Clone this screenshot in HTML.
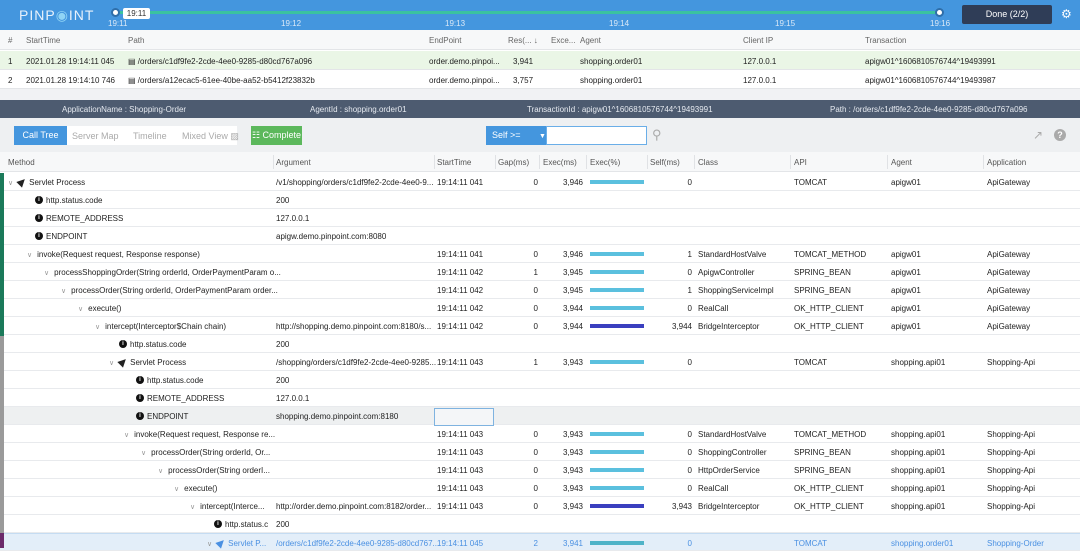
<!DOCTYPE html>
<html><head><meta charset="utf-8"><style>
*{box-sizing:border-box;margin:0;padding:0}
body{width:1080px;height:548px;overflow:hidden;background:#fff;font-family:"Liberation Sans",sans-serif;font-size:8px;color:#222;position:relative}
.abs{position:absolute;white-space:nowrap}
#top{position:absolute;left:0;top:0;width:1080px;height:30px;background:#4496de}
.tl{position:absolute;top:19px;font-size:8px;color:#dbe9f7}
.h1{position:absolute;top:30px;left:0;width:1080px;height:20px;background:#f7f8f9;border-bottom:1px solid #e3e5e8;color:#666}
.h1 span,.t1 span{position:absolute;top:6px}
.t1{position:absolute;left:0;width:1080px;height:19px;border-bottom:1px solid #e3e5e8}
.r{position:absolute;left:0;width:1080px;height:18px;border-bottom:1px solid #e8eaed}
.r span{position:absolute;top:5px;white-space:nowrap;line-height:9px}
.s{left:437px}.g{left:495px;width:43px;text-align:right}.e{left:539px;width:44px;text-align:right}
.f{left:647px;width:45px;text-align:right}.c{left:698px}.p{left:794px}.ag{left:891px}.ap{left:987px}
.a{left:276px}
.bar{position:absolute;left:590px;top:7px;width:54px;height:4px;background:#5bc0de}
.bar.d{background:#3a3fbf}
.i{display:inline-block;width:8px;height:8px;border-radius:50%;background:#111;color:#fff;font-size:6px;text-align:center;line-height:8px;font-weight:bold;font-style:normal;margin-right:3px;vertical-align:top;margin-top:0}
.cv{color:#999;font-size:7px;margin-right:5px;font-weight:normal}
.pl{display:inline-block;width:0;height:0;border-left:4px solid transparent;border-right:4px solid transparent;border-bottom:8px solid #222;transform:rotate(45deg);margin-right:3px;vertical-align:top}
.hd{position:absolute;top:152px;left:0;width:1080px;height:20px;background:#f7f8f9;border-bottom:1px solid #e3e5e8;color:#555}
.hd span{position:absolute;top:6px}
.vl{position:absolute;top:3px;width:1px;height:14px;background:#e0e2e5}
.lb{position:absolute;left:0;width:4px;z-index:5}
</style></head><body>
<div id="top">
 <div class="abs" style="left:19px;top:7px;font-size:14px;color:#e8f1fb;letter-spacing:1px">PINP<span style="color:#8fd4f5">◉</span>INT</div>
 <div class="abs" style="left:116px;top:11px;width:824px;height:3px;background:#3bc2a0"></div>
 <div class="abs" style="left:111px;top:8px;width:9px;height:9px;border-radius:50%;background:#fff;border:2px solid #2f6ea9"></div>
 <div class="abs" style="left:935px;top:8px;width:9px;height:9px;border-radius:50%;background:#fff;border:2px solid #2f6ea9"></div>
 <div class="abs" style="left:123px;top:8px;width:27px;height:11px;background:#fff;color:#333;font-size:8px;text-align:center;line-height:11px;border-radius:2px">19:11</div>
 <span class="tl" style="left:108px">19:11</span><span class="tl" style="left:281px">19:12</span><span class="tl" style="left:445px">19:13</span><span class="tl" style="left:609px">19:14</span><span class="tl" style="left:775px">19:15</span><span class="tl" style="left:930px">19:16</span>
 <div class="abs" style="left:962px;top:5px;width:90px;height:19px;background:#2f3d57;color:#fff;font-size:9px;text-align:center;line-height:19px;border-radius:2px">Done (2/2)</div>
 <div class="abs" style="left:1061px;top:7px;font-size:12px;color:#fff">⚙</div>
</div>
<div class="h1"><span style="left:8px">#</span><span style="left:26px">StartTime</span><span style="left:128px">Path</span><span style="left:429px">EndPoint</span><span style="left:508px">Res(... ↓</span><span style="left:551px">Exce...</span><span style="left:580px">Agent</span><span style="left:743px">Client IP</span><span style="left:865px">Transaction</span></div>
<div class="t1" style="top:51px;background:#eaf6e6"><span style="left:8px">1</span><span style="left:26px">2021.01.28 19:14:11 045</span><span style="left:128px">▤ /orders/c1df9fe2-2cde-4ee0-9285-d80cd767a096</span><span style="left:429px">order.demo.pinpoi...</span><span style="left:513px">3,941</span><span style="left:580px">shopping.order01</span><span style="left:743px">127.0.0.1</span><span style="left:865px">apigw01^1606810576744^19493991</span></div>
<div class="t1" style="top:70px"><span style="left:8px">2</span><span style="left:26px">2021.01.28 19:14:10 746</span><span style="left:128px">▤ /orders/a12ecac5-61ee-40be-aa52-b5412f23832b</span><span style="left:429px">order.demo.pinpoi...</span><span style="left:513px">3,757</span><span style="left:580px">shopping.order01</span><span style="left:743px">127.0.0.1</span><span style="left:865px">apigw01^1606810576744^19493987</span></div>
<div class="abs" style="left:0;top:89px;width:1080px;height:11px;background:#f1f2f4"></div>
<div class="abs" style="left:0;top:100px;width:1080px;height:18px;background:#4d5b70;color:#e6eaf0">
 <span class="abs" style="left:62px;top:5px">ApplicationName : Shopping-Order</span><span class="abs" style="left:310px;top:5px">AgentId : shopping.order01</span><span class="abs" style="left:527px;top:5px">TransactionId : apigw01^1606810576744^19493991</span><span class="abs" style="left:830px;top:5px">Path : /orders/c1df9fe2-2cde-4ee0-9285-d80cd767a096</span></div>
<div class="abs" style="left:0;top:118px;width:1080px;height:34px;background:#eef0f2"></div>
<div class="abs" style="left:14px;top:126px;width:223px;height:19px;background:#fff"></div>
<div class="abs" style="left:14px;top:126px;width:53px;height:19px;background:#4496de;color:#fff;font-size:9px;text-align:center;line-height:19px">Call Tree</div>
<span class="abs" style="left:72px;top:131px;color:#aaa;font-size:9px">Server Map</span><span class="abs" style="left:133px;top:131px;color:#aaa;font-size:9px">Timeline</span><span class="abs" style="left:182px;top:131px;color:#aaa;font-size:9px">Mixed View ▨</span>
<div class="abs" style="left:251px;top:126px;width:51px;height:19px;background:#5cb85c;color:#fff;font-size:9px;text-align:center;line-height:19px">☷ Complete</div>
<div class="abs" style="left:486px;top:126px;width:60px;height:19px;background:#4496de;color:#fff;font-size:9px;line-height:19px;padding-left:6px">Self &gt;= <span style="margin-left:16px;font-size:7px">▼</span></div>
<div class="abs" style="left:546px;top:126px;width:101px;height:19px;background:#fff;border:1px solid #6aaee8"></div>
<span class="abs" style="left:652px;top:127px;color:#aaa;font-size:13px">⚲</span>
<span class="abs" style="left:1033px;top:128px;color:#aaa;font-size:12px">↗</span>
<div class="abs" style="left:1054px;top:129px;width:12px;height:12px;border-radius:50%;background:#aaa;color:#fff;font-size:9px;text-align:center;line-height:12px;font-weight:bold">?</div>
<div class="hd"><span style="left:8px">Method</span><span style="left:276px">Argument</span><span style="left:437px">StartTime</span><span style="left:498px">Gap(ms)</span><span style="left:543px">Exec(ms)</span><span style="left:590px">Exec(%)</span><span style="left:650px">Self(ms)</span><span style="left:698px">Class</span><span style="left:794px">API</span><span style="left:891px">Agent</span><span style="left:987px">Application</span>
<i class="vl" style="left:273px"></i><i class="vl" style="left:434px"></i><i class="vl" style="left:495px"></i><i class="vl" style="left:539px"></i><i class="vl" style="left:586px"></i><i class="vl" style="left:647px"></i><i class="vl" style="left:694px"></i><i class="vl" style="left:790px"></i><i class="vl" style="left:887px"></i><i class="vl" style="left:983px"></i></div>

<div class="r" style="top:173px"><span style="left:8px"><b class="cv">∨</b><i class="pl"></i>Servlet Process</span><span class="a">/v1/shopping/orders/c1df9fe2-2cde-4ee0-9...</span><span class="s">19:14:11 041</span><span class="g">0</span><span class="e">3,946</span><i class="bar"></i><span class="f">0</span><span class="p">TOMCAT</span><span class="ag">apigw01</span><span class="ap">ApiGateway</span></div>
<div class="r" style="top:191px"><span style="left:35px"><i class="i">i</i>http.status.code</span><span class="a">200</span></div>
<div class="r" style="top:209px"><span style="left:35px"><i class="i">i</i>REMOTE_ADDRESS</span><span class="a">127.0.0.1</span></div>
<div class="r" style="top:227px"><span style="left:35px"><i class="i">i</i>ENDPOINT</span><span class="a">apigw.demo.pinpoint.com:8080</span></div>
<div class="r" style="top:245px"><span style="left:27px"><b class="cv">∨</b>invoke(Request request, Response response)</span><span class="s">19:14:11 041</span><span class="g">0</span><span class="e">3,946</span><i class="bar"></i><span class="f">1</span><span class="c">StandardHostValve</span><span class="p">TOMCAT_METHOD</span><span class="ag">apigw01</span><span class="ap">ApiGateway</span></div>
<div class="r" style="top:263px"><span style="left:44px"><b class="cv">∨</b>processShoppingOrder(String orderId, OrderPaymentParam o...</span><span class="s">19:14:11 042</span><span class="g">1</span><span class="e">3,945</span><i class="bar"></i><span class="f">0</span><span class="c">ApigwController</span><span class="p">SPRING_BEAN</span><span class="ag">apigw01</span><span class="ap">ApiGateway</span></div>
<div class="r" style="top:281px"><span style="left:61px"><b class="cv">∨</b>processOrder(String orderId, OrderPaymentParam order...</span><span class="s">19:14:11 042</span><span class="g">0</span><span class="e">3,945</span><i class="bar"></i><span class="f">1</span><span class="c">ShoppingServiceImpl</span><span class="p">SPRING_BEAN</span><span class="ag">apigw01</span><span class="ap">ApiGateway</span></div>
<div class="r" style="top:299px"><span style="left:78px"><b class="cv">∨</b>execute()</span><span class="s">19:14:11 042</span><span class="g">0</span><span class="e">3,944</span><i class="bar"></i><span class="f">0</span><span class="c">RealCall</span><span class="p">OK_HTTP_CLIENT</span><span class="ag">apigw01</span><span class="ap">ApiGateway</span></div>
<div class="r" style="top:317px"><span style="left:95px"><b class="cv">∨</b>intercept(Interceptor$Chain chain)</span><span class="a">http://shopping.demo.pinpoint.com:8180/s...</span><span class="s">19:14:11 042</span><span class="g">0</span><span class="e">3,944</span><i class="bar d"></i><span class="f">3,944</span><span class="c">BridgeInterceptor</span><span class="p">OK_HTTP_CLIENT</span><span class="ag">apigw01</span><span class="ap">ApiGateway</span></div>
<div class="r" style="top:335px"><span style="left:119px"><i class="i">i</i>http.status.code</span><span class="a">200</span></div>
<div class="r" style="top:353px"><span style="left:109px"><b class="cv">∨</b><i class="pl"></i>Servlet Process</span><span class="a">/shopping/orders/c1df9fe2-2cde-4ee0-9285...</span><span class="s">19:14:11 043</span><span class="g">1</span><span class="e">3,943</span><i class="bar"></i><span class="f">0</span><span class="p">TOMCAT</span><span class="ag">shopping.api01</span><span class="ap">Shopping-Api</span></div>
<div class="r" style="top:371px"><span style="left:136px"><i class="i">i</i>http.status.code</span><span class="a">200</span></div>
<div class="r" style="top:389px"><span style="left:136px"><i class="i">i</i>REMOTE_ADDRESS</span><span class="a">127.0.0.1</span></div>
<div class="r" style="top:407px;background:#eef0f1"><span style="left:136px"><i class="i">i</i>ENDPOINT</span><span class="a">shopping.demo.pinpoint.com:8180</span><div class="abs" style="left:434px;top:1px;width:60px;height:18px;border:1px solid #7fb3e0;background:#f4f6f8"></div></div>
<div class="r" style="top:425px"><span style="left:124px"><b class="cv">∨</b>invoke(Request request, Response re...</span><span class="s">19:14:11 043</span><span class="g">0</span><span class="e">3,943</span><i class="bar"></i><span class="f">0</span><span class="c">StandardHostValve</span><span class="p">TOMCAT_METHOD</span><span class="ag">shopping.api01</span><span class="ap">Shopping-Api</span></div>
<div class="r" style="top:443px"><span style="left:141px"><b class="cv">∨</b>processOrder(String orderId, Or...</span><span class="s">19:14:11 043</span><span class="g">0</span><span class="e">3,943</span><i class="bar"></i><span class="f">0</span><span class="c">ShoppingController</span><span class="p">SPRING_BEAN</span><span class="ag">shopping.api01</span><span class="ap">Shopping-Api</span></div>
<div class="r" style="top:461px"><span style="left:158px"><b class="cv">∨</b>processOrder(String orderI...</span><span class="s">19:14:11 043</span><span class="g">0</span><span class="e">3,943</span><i class="bar"></i><span class="f">0</span><span class="c">HttpOrderService</span><span class="p">SPRING_BEAN</span><span class="ag">shopping.api01</span><span class="ap">Shopping-Api</span></div>
<div class="r" style="top:479px"><span style="left:174px"><b class="cv">∨</b>execute()</span><span class="s">19:14:11 043</span><span class="g">0</span><span class="e">3,943</span><i class="bar"></i><span class="f">0</span><span class="c">RealCall</span><span class="p">OK_HTTP_CLIENT</span><span class="ag">shopping.api01</span><span class="ap">Shopping-Api</span></div>
<div class="r" style="top:497px"><span style="left:190px"><b class="cv">∨</b>intercept(Interce...</span><span class="a">http://order.demo.pinpoint.com:8182/order...</span><span class="s">19:14:11 043</span><span class="g">0</span><span class="e">3,943</span><i class="bar d"></i><span class="f">3,943</span><span class="c">BridgeInterceptor</span><span class="p">OK_HTTP_CLIENT</span><span class="ag">shopping.api01</span><span class="ap">Shopping-Api</span></div>
<div class="r" style="top:515px"><span style="left:214px"><i class="i">i</i>http.status.c</span><span class="a">200</span></div>
<div class="r" style="top:533px;background:#e3eef9;color:#4a90e2;border-top:1px solid #c5dcf2"><span style="left:207px"><b class="cv">∨</b><i class="pl" style="border-bottom-color:#4a90e2"></i>Servlet P...</span><span class="a">/orders/c1df9fe2-2cde-4ee0-9285-d80cd767...</span><span class="s">19:14:11 045</span><span class="g">2</span><span class="e">3,941</span><i class="bar" style="background:#4fb3c8"></i><span class="f">0</span><span class="p">TOMCAT</span><span class="ag">shopping.order01</span><span class="ap">Shopping-Order</span></div>

<div class="lb" style="top:173px;height:163px;background:#1b7a5a"></div>
<div class="lb" style="top:336px;height:197px;background:#9a9a9a"></div>
<div class="lb" style="top:533px;height:15px;background:#6b2a6b"></div>
</body></html>
